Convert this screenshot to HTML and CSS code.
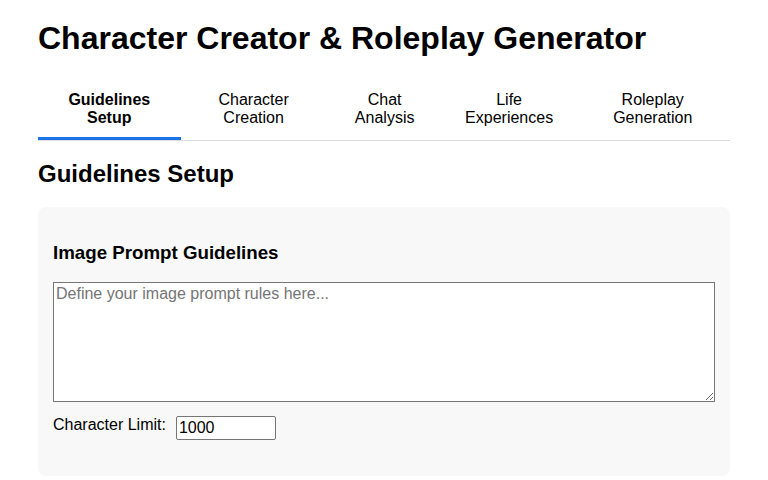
FILE: index.html
```html
<!DOCTYPE html>
<html lang="en">
<head>
<meta charset="utf-8">
<title>Character Creator &amp; Roleplay Generator</title>
<link rel="stylesheet" href="styles.css">
</head>
<body>
<div class="container">
  <h1 class="title">Character Creator &amp; Roleplay Generator</h1>
  <div class="tabs">
    <button class="tab active">Guidelines Setup</button>
    <button class="tab">Character Creation</button>
    <button class="tab">Chat Analysis</button>
    <button class="tab">Life Experiences</button>
    <button class="tab">Roleplay Generation</button>
  </div>
  <h2 class="section-title">Guidelines Setup</h2>
  <div class="card">
    <h3 class="card-title">Image Prompt Guidelines</h3>
    <textarea class="rules" placeholder="Define your image prompt rules here..."></textarea>
    <div class="limit-row">
      <label class="limit-label" for="limit">Character Limit:</label>
      <input class="limit-input" id="limit" type="number" value="1000">
    </div>
  </div>
</div>
</body>
</html>
```
FILE: styles.css
```css
body {
  margin: 0;
  font-family: "Liberation Sans", Arial, sans-serif;
  color: #000;
  background: #fff;
}

.container {
  padding: 0 38px;
}

.title {
  font-size: 32px;
  font-weight: bold;
  margin: 20px 0 24px;
}

.tabs {
  display: flex;
  border-bottom: 1px solid #dddddd;
}

.tab {
  font-family: "Liberation Sans", Arial, sans-serif;
  font-size: 16px;
  color: #000;
  background: none;
  border: none;
  border-bottom: 3px solid transparent;
  padding: 10px 20px;
  margin: 0;
  cursor: pointer;
}

.tab.active {
  font-weight: bold;
  border-bottom-color: #1a73e8;
}

.section-title {
  font-size: 24px;
  margin: 19px 0 19px;
}

.card {
  background: #f8f8f8;
  border-radius: 8px;
  padding: 16px 15px 36px;
}

.card-title {
  font-size: 18.72px;
  margin: 18.72px 0;
}

.rules {
  display: block;
  box-sizing: border-box;
  width: 100%;
  height: 120px;
  margin: 0 0 14px;
  padding: 2px;
  border: 1px solid #767676;
  font-family: "Liberation Sans", Arial, sans-serif;
  font-size: 16px;
  background: #fff;
}

.rules::placeholder {
  color: #757575;
}

.limit-row {
  display: flex;
  align-items: flex-start;
  gap: 10px;
}

.limit-label {
  font-size: 16px;
}

.limit-input {
  box-sizing: border-box;
  width: 100px;
  height: 24px;
  padding: 1px 2px;
  border: 1px solid #767676;
  border-radius: 2px;
  font-family: "Liberation Sans", Arial, sans-serif;
  font-size: 16px;
  -moz-appearance: textfield;
  appearance: textfield;
}

.limit-input::-webkit-outer-spin-button,
.limit-input::-webkit-inner-spin-button {
  -webkit-appearance: none;
  margin: 0;
}
```
